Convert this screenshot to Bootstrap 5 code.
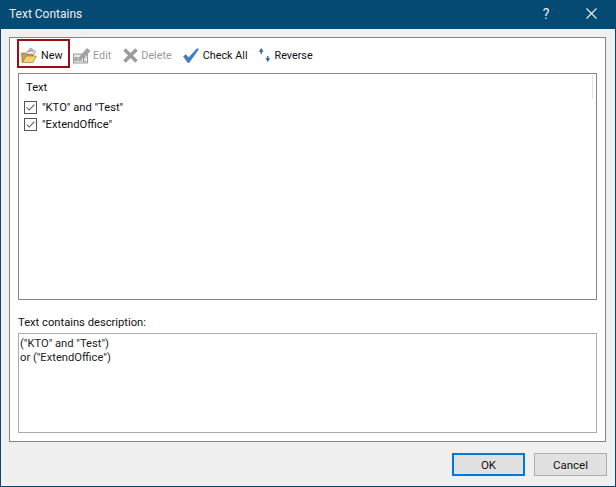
<!DOCTYPE html>
<html lang="en">
<head>
<meta charset="UTF-8">
<title>Text Contains</title>
<link rel="stylesheet" href="https://cdn.jsdelivr.net/npm/bootstrap@5.3.0/dist/css/bootstrap.min.css">
<style>
html, body { height: 487px; overflow: hidden; }
body { background: #f0f0f0; font-family: Roboto, "Noto Sans", sans-serif; font-size: 11.2px; line-height: 15px; color: #111; }
.dialog { width: 616px; height: 487px; border: 1px solid #044a72; border-top: 0; }
.titlebar { height: 29px; background: #044a72; color: #e8eff4; font-size: 12px; padding-left: 8px; }
.titlebar svg { display: block; }
.help { width: 14px; text-align: center; font-size: 14px; margin-right: 33px; }
.close-x { margin: 0 18px 2px 0; }
.panel { margin: 8px 9px 0 8px; height: 405px; background: #fff; border: 1px solid #858585; padding: 1px 8px 0 8px; }
.tools { height: 34px; font-size: 10.8px; }
.tool { height: 29px; padding-top: 3px; white-space: nowrap; }
.tool svg { flex: none; display: block; }
.tool.picked { outline: 2px solid #9b0f14; outline-offset: -2px; padding-left: 4px; margin-left: -1px; width: 53px; gap: 4px; }
.tool.off { color: #9a9a9a; }
.t-edit { margin-left: 3px; gap: 2px; }
.t-delete { margin-left: 12px; gap: 3px; }
.t-check { margin-left: 11px; gap: 4px; }
.t-reverse { margin-left: 10px; gap: 4px; }
.list { height: 227px; border: 1px solid #868686; padding: 6px 0 0 7px; position: relative; }
.list .head { height: 19px; }
.list .sep { position: absolute; right: 3px; top: 1px; width: 1px; height: 24px; background: #e3e3e3; }
.item { height: 17px; margin-left: -2px; }
.box { width: 13px; height: 13px; border: 1px solid #555; margin-right: 5px; display: block; flex: none; }
.desc-label { margin-top: 15px; height: 18px; }
.desc { height: 100px; border: 1px solid #ababab; padding: 3px 1px; line-height: 14px; color: #222; }
.foot { padding: 11px 8px 0 0; }
.bt { width: 73px; height: 23px; background: #e1e1e1; border: 1px solid #adadad; border-radius: 0; padding: 0; font-size: 11.5px; line-height: 20px; color: #111; }
.bt.main { border: 2px solid #0078d7; }
</style>
</head>
<body>
<div class="dialog">
  <div class="titlebar d-flex align-items-center">
    <span class="flex-grow-1">Text Contains</span>
    <span class="help">?</span>
    <svg class="close-x" width="11" height="11" viewBox="0 0 11 11"><path d="M.5.5 10.500 10.500M10.500.5 .5 10.500" stroke="#eef3f6" stroke-width="1.100" fill="none"/></svg>
  </div>
  <div class="panel">
    <div class="tools d-flex align-items-start">
      <div class="tool picked d-flex align-items-center">
        <svg width="16" height="16" viewBox="0 0 16 16">
          <path d="M4.500 7 9.500 1l5 3.500-3 5z" fill="#e3e6f0" stroke="#6a7390" stroke-width=".7"/>
          <path d="M7.500 5 9.800 3l2 1.500" stroke="#c0392b" stroke-width=".9" fill="none"/>
          <path d="M.6 6h4l1 1.500h6v2H5L2.500 15H1z" fill="#c9a24a" stroke="#8d6d24" stroke-width=".6"/>
          <path d="M1.300 15.500 5 9h10.500l-3.500 6.500z" fill="#f3cf74" stroke="#a07c2c" stroke-width=".7"/>
        </svg>
        <span>New</span>
      </div>
      <div class="tool off t-edit d-flex align-items-center">
        <svg width="18" height="18" viewBox="0 0 18 18">
          <rect x=".5" y="8" width="14" height="9" fill="#e8e8e8" stroke="#9a9a9a"/>
          <path d="M2 15.500V11.500h2v4M2 13.500h2M6 15.500V11.500h2v4M6 13.500h2M12.500 11.500H10.500v4h2" stroke="#8c8c8c" fill="none"/>
          <path d="M7 10 14 2l3.500 3-7 7.500H7z" fill="#a3a3a3"/>
        </svg>
        <span>Edit</span>
      </div>
      <div class="tool off t-delete d-flex align-items-center">
        <svg width="15" height="15" viewBox="0 0 15 15"><path d="M1.500 1.500 13.500 13.500M13.500 1.500 1.500 13.500" stroke="#9d9d9d" stroke-width="3.600" fill="none"/></svg>
        <span>Delete</span>
      </div>
      <div class="tool t-check d-flex align-items-center">
        <svg width="16" height="15" viewBox="0 0 17 16"><path d="M.5 9 3 7l3 3.500L15 .5 16.500 1.500 6.500 15.500h-1.500z" fill="#3f80c8" stroke="#2a66ad" stroke-width=".5"/></svg>
        <span>Check All</span>
      </div>
      <div class="tool t-reverse d-flex align-items-center">
        <svg width="13" height="15" viewBox="0 0 13 16">
          <path d="M3 0 .5 4h1.800v2.500h1.400V4H5.500z" fill="#2a62b8"/>
          <path d="M10 15 7.500 11h1.800V8.500h1.400V11h1.800z" fill="#2a62b8"/>
        </svg>
        <span>Reverse</span>
      </div>
    </div>
    <div class="list">
      <span class="sep"></span>
      <div class="head">Text</div>
      <div class="item d-flex align-items-center">
        <svg class="box" viewBox="0 0 13 13"><path d="M2 6.500 5 9.500 11 3" stroke="#555" stroke-width="1.200" fill="none"/></svg>
        <span>"KTO" and "Test"</span>
      </div>
      <div class="item d-flex align-items-center">
        <svg class="box" viewBox="0 0 13 13"><path d="M2 6.500 5 9.500 11 3" stroke="#555" stroke-width="1.200" fill="none"/></svg>
        <span>"ExtendOffice"</span>
      </div>
    </div>
    <div class="desc-label">Text contains description:</div>
    <div class="desc">("KTO" and "Test")<br>or ("ExtendOffice")</div>
  </div>
  <div class="foot d-flex justify-content-end" style="gap:9px">
    <button class="btn bt main" type="button">OK</button>
    <button class="btn bt" type="button">Cancel</button>
  </div>
</div>
</body>
</html>
